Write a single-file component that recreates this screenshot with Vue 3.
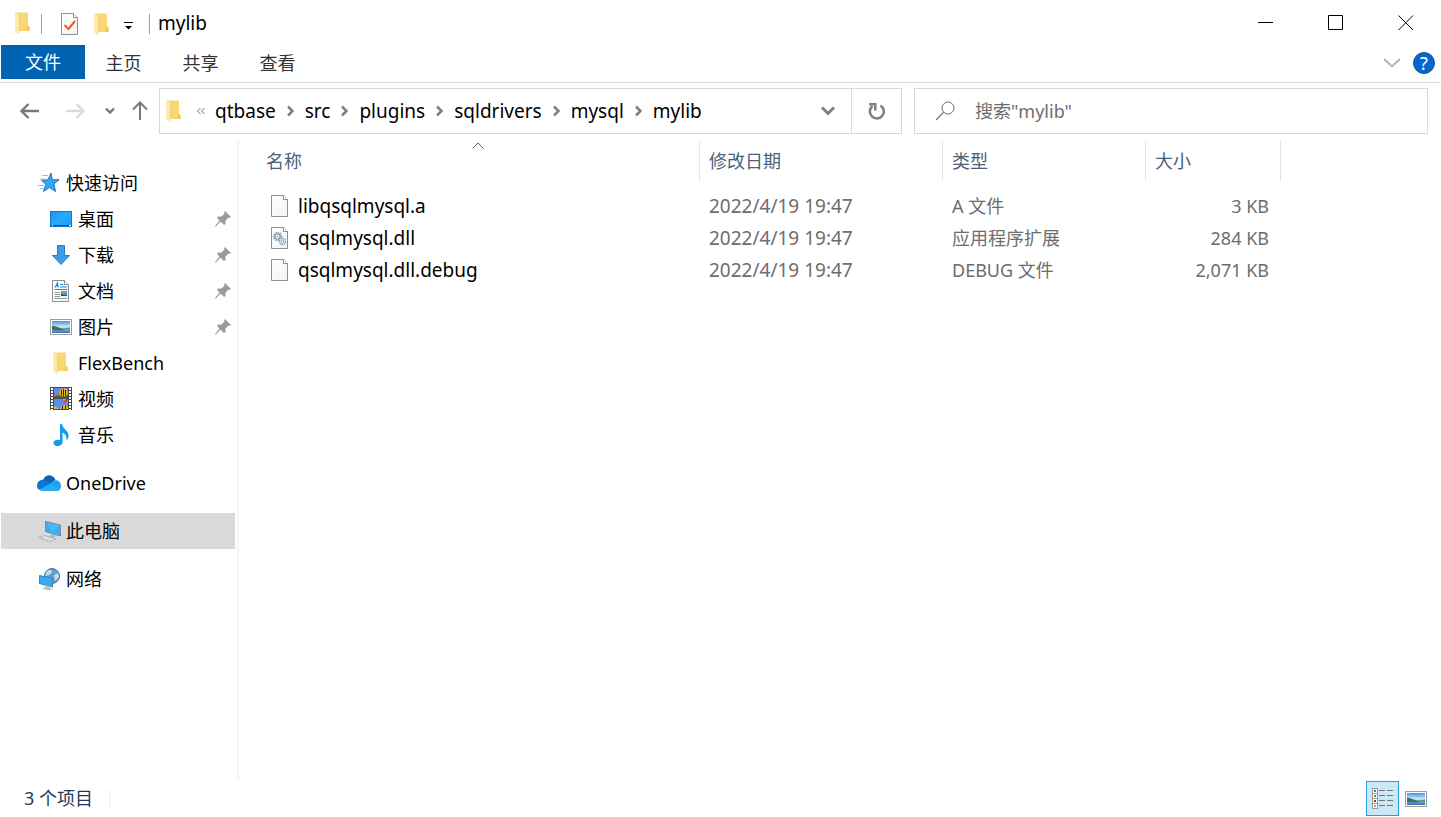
<template>
  <svg class="sprite" aria-hidden="true">
    <defs>
      <linearGradient id="folderFront" x1="0" y1="0" x2="1" y2="0">
        <stop offset="0" stop-color="#ffeebb" />
        <stop offset="1" stop-color="#fbe195" />
      </linearGradient>
      <linearGradient id="screenBlue" x1="0" y1="0" x2="1" y2="1">
        <stop offset="0" stop-color="#1a94f2" />
        <stop offset="0.5" stop-color="#27a9ff" />
        <stop offset="1" stop-color="#159bfb" />
      </linearGradient>
      <linearGradient id="sky" x1="0" y1="0" x2="0" y2="1">
        <stop offset="0" stop-color="#4f8fe6" />
        <stop offset="0.5" stop-color="#cfe9fb" />
        <stop offset="0.65" stop-color="#8fc0df" />
        <stop offset="1" stop-color="#2e6cab" />
      </linearGradient>
      <linearGradient id="paper" x1="0" y1="0" x2="1" y2="1">
        <stop offset="0" stop-color="#ffffff" />
        <stop offset="1" stop-color="#f1f3f4" />
      </linearGradient>
    </defs>

    <symbol id="folder" viewBox="0 0 24 24">
      <path d="M4 1.500H17V15L18.500 16V20H8z" fill="#f8d775" />
      <path d="M17 14.500L18.500 16V20H15.500z" fill="#eec65f" />
      <path d="M4 1.500L9 4V20L8 23L4 20.500z" fill="url(#folderFront)" />
      <path d="M9 4V20" stroke="#eac765" stroke-width="0.800" />
    </symbol>

    <symbol id="page" viewBox="0 0 24 24">
      <path d="M3.500 1.500H15.500L19.500 5.500V22.500H3.500z" fill="url(#paper)" stroke="#8f8f8f" />
      <path d="M15.500 1.500V5.500H19.500" fill="#fff" stroke="#8f8f8f" />
    </symbol>

    <symbol id="gears" viewBox="0 0 24 24">
      <use href="#page" width="24" height="24" />
      <g fill="none">
        <circle cx="9.500" cy="10.500" r="4" stroke="#9aa7b2" stroke-width="1.500" stroke-dasharray="1.500 0.800" />
        <circle cx="9.500" cy="10.500" r="2.600" stroke="#8a98a5" stroke-width="1.300" />
        <circle cx="9.500" cy="10.500" r="0.800" fill="#8a98a5" />
        <circle cx="14.500" cy="15.500" r="3.200" fill="#f3f8fb" stroke="#8196a6" stroke-width="1.200" stroke-dasharray="1.400 0.700" />
        <circle cx="14.500" cy="15.500" r="1.500" stroke="#7f9db4" />
      </g>
    </symbol>

    <symbol id="checkPage" viewBox="0 0 24 24">
      <use href="#page" width="24" height="24" />
      <path d="M6.500 13L10.500 17L17 9" fill="none" stroke="#f25c19" stroke-width="2" />
    </symbol>

    <symbol id="star" viewBox="0 0 24 24">
      <path d="M5 4.500H11M3 8H8M3 17.500H9M1 14.500H7" stroke="#7fc1ef" />
      <path d="M14 2L15.300 8.800L22 8.700L17 13L18.500 20.500L12.500 16.500L6.500 20.500L9 13.500L4.500 9.300L11 8.800z" fill="#35a6f2" stroke="#1a7bc4" />
    </symbol>

    <symbol id="desktop" viewBox="0 0 24 24">
      <rect x="1.500" y="4.500" width="21" height="15" fill="url(#screenBlue)" stroke="#147ac4" />
      <path d="M1 18.500H23" stroke="#0b4f87" />
      <path d="M3 18.500H4M20 18.500H22" stroke="#fff" />
    </symbol>

    <symbol id="download" viewBox="0 0 24 24">
      <path d="M8.500 2.500H15.500V12.500H20.500L12 21.500L3.500 12.500H8.500z" fill="#3f9ae8" stroke="#2478c4" />
    </symbol>

    <symbol id="document" viewBox="0 0 24 24">
      <use href="#page" width="24" height="24" />
      <path d="M6 8.500L8.500 4L9 8.500M7.500 6.800H9M11 5.500H14M11 8H18" fill="none" stroke="#2186d3" stroke-width="1.200" />
      <path d="M5.500 10.500H18" stroke="#2186d3" />
      <path d="M5.500 13.500H11M5.500 15.500H11M5.500 17.500H11M5.500 19.500H18" stroke="#9a9a9a" />
      <rect x="12" y="12" width="6" height="5" fill="#5ba0d6" />
      <path d="M12 17V14.500L15 16L18 15.500V17z" fill="#285c51" />
    </symbol>

    <symbol id="picture" viewBox="0 0 24 24">
      <rect x="1.500" y="4.500" width="21" height="15" fill="#fff" stroke="#9b9b9b" />
      <rect x="3" y="6" width="18" height="12" fill="url(#sky)" />
      <path d="M3 10.500L7 11.500L11 13L17 14.500L11 15.500L3 15z" fill="#39735e" />
      <path d="M14 13.500L21 12.500V14.500H16z" fill="#5f9180" />
    </symbol>

    <symbol id="video" viewBox="0 0 24 24">
      <rect x="1" y="0" width="22" height="23" fill="#4a4a4a" />
      <rect x="5" y="1" width="14" height="10" fill="#5c8fe6" />
      <rect x="5" y="12" width="14" height="10" fill="#5c8fe6" />
      <path d="M5 9L9 8L12 9L19 8V11H5z" fill="#2c6b3a" />
      <path d="M5 6H8L10 8L5 9.500z" fill="#d95a8a" />
      <circle cx="14.500" cy="5.500" r="4" fill="#f2b51d" />
      <path d="M12.500 3V8.500M14.500 2V9.500M16.500 3V8.500" stroke="#322622" />
      <path d="M12 12H19L16 16z" fill="#d7372e" />
      <path d="M13 12H17L15 14z" fill="#efb321" />
      <path d="M11 22A4 4 0 0 1 19 22z" fill="#efb321" />
      <path d="M13.500 18.500V22M16.500 18.500V22" stroke="#322622" />
      <path d="M5 19L9 21V22H5z" fill="#e0c24b" />
      <path d="M3 1V23M21 1V23" stroke="#fff" stroke-width="2" stroke-dasharray="2 1" />
    </symbol>

    <symbol id="music" viewBox="0 0 24 24">
      <path d="M11 1H13C13.500 6 20.500 8 19.500 14L17.500 18C18 13 16 10.500 13.500 9.500V19C13.500 24 4.500 24.500 4.500 20C4.500 17 8.500 16 11 17z" fill="#0e9bf0" />
    </symbol>

    <symbol id="cloud" viewBox="0 0 24 24">
      <path d="M6 9C8 3 16 2.500 18.500 9L12 14z" fill="#0a63b8" />
      <path d="M0 15C0 10 4 8 7.500 9L17 14L4 19C1.500 19 0 17.500 0 15z" fill="#0f78d4" />
      <path d="M13 13L17 9.500C21 8.500 24 11 24 15C24 18 22 20 19 20H5L2 18.800z" fill="#1fa2ee" />
      <path d="M2 18.800L14 13L23 18C22 19.500 21 20 19 20H5z" fill="#2baaf2" />
    </symbol>

    <symbol id="computer" viewBox="0 0 24 24">
      <path d="M8.500 2.500L23.500 6V17L8.500 12.500z" fill="#38adf7" stroke="#6f8ba0" />
      <path d="M9.500 3.500L23 6.500L15 14z" fill="#5cc0ff" opacity="0.500" />
      <path d="M14 15L19 16.500L17 19L13 18z" fill="#aeb8bf" />
      <path d="M1.500 18.500L8 16.500L19 20L12 22.500z" fill="#d8dee2" stroke="#9aa5ad" stroke-dasharray="2 1" />
    </symbol>

    <symbol id="network" viewBox="0 0 24 24">
      <circle cx="15" cy="9" r="7.500" fill="#5d9fca" stroke="#397da8" />
      <path d="M9.500 5C12 2 14 3 15.500 5L12 8L8 9zM17 8L21 6L22 10L18 14z" fill="#c0e0ee" />
      <path d="M2.500 8.500L15.500 11.500V20L2.500 16.500z" fill="#34adf8" stroke="#527f9d" />
      <path d="M8 18L13 19.500V21L16 22L11 23.500L5 21.500L8 20.500z" fill="#b9c3ca" />
    </symbol>

    <symbol id="pin" viewBox="0 0 16 16">
      <path d="M10 0L16 6L14.500 7L13.500 6.500L10.500 9.500V13L9 14L5.500 10.500L1 15.500L0 15.500L0.500 14.500L4.500 9.500L2 7L3 5.500H6.500L9.500 2.500L9 1.500z" fill="#929da4" />
    </symbol>

    <symbol id="crumbArrow" viewBox="0 0 10 12">
      <path d="M2 1.500L6.500 6L2 10.500" fill="none" stroke="#808080" stroke-width="2.500" />
    </symbol>
  </svg>

  <div class="explorer">
    <header class="titleBar">
      <svg class="icon"><use href="#folder" /></svg>
      <span class="divider"></span>
      <button class="quickButton" aria-label="属性"><svg class="icon"><use href="#checkPage" /></svg></button>
      <button class="quickButton" aria-label="新建文件夹"><svg class="icon"><use href="#folder" /></svg></button>
      <button class="quickMenu" aria-label="自定义快速访问工具栏">
        <svg width="10" height="10" viewBox="0 0 10 10">
          <path d="M0 1.500H9" stroke="#000" />
          <path d="M1 5H8L4.500 8.500z" fill="#000" />
        </svg>
      </button>
      <span class="divider"></span>
      <h1 class="title">mylib</h1>
      <div class="windowButtons">
        <button aria-label="最小化">
          <svg width="16" height="16" viewBox="0 0 16 16"><path d="M0 7.500H15" stroke="#000" /></svg>
        </button>
        <button aria-label="最大化">
          <svg width="16" height="16" viewBox="0 0 16 16"><path d="M0.500 0.500H14.500V14.500H0.500z" fill="none" stroke="#000" /></svg>
        </button>
        <button aria-label="关闭">
          <svg width="16" height="16" viewBox="0 0 16 16"><path d="M0.500 0.500L15 15M15 0.500L0.500 15" stroke="#000" /></svg>
        </button>
      </div>
    </header>

    <nav class="ribbon">
      <button class="fileTab">文件</button>
      <button v-for="tab in tabs" :key="tab" class="tab">{{ tab }}</button>
      <div class="ribbonTools">
        <button aria-label="展开功能区">
          <svg width="18" height="12" viewBox="0 0 18 12"><path d="M1 2L9 9.500L17 2" fill="none" stroke="#b4b4b4" stroke-width="2" /></svg>
        </button>
        <button class="help" aria-label="帮助">?</button>
      </div>
    </nav>

    <div class="navBar">
      <div class="navButtons">
        <button class="back" aria-label="后退">
          <svg width="20" height="16" viewBox="0 0 20 16"><path d="M19 8H2M8.500 1L1.500 8L8.500 15" fill="none" stroke="#787878" stroke-width="2.400" /></svg>
        </button>
        <button class="forward" aria-label="前进" disabled>
          <svg width="20" height="16" viewBox="0 0 20 16"><path d="M0 8H17M10.500 1L17.500 8L10.500 15" fill="none" stroke="#dadada" stroke-width="2.400" /></svg>
        </button>
        <button class="recent" aria-label="最近位置">
          <svg width="10" height="8" viewBox="0 0 10 8"><path d="M1 1.500L5 5.500L9 1.500" fill="none" stroke="#787878" stroke-width="2.400" /></svg>
        </button>
        <button class="up" aria-label="向上">
          <svg width="16" height="20" viewBox="0 0 16 20"><path d="M8 19V2M1 8.500L8 1.500L15 8.500" fill="none" stroke="#787878" stroke-width="2" /></svg>
        </button>
      </div>
      <div class="addressBar">
        <svg class="icon"><use href="#folder" /></svg>
        <button class="overflow" aria-label="更多位置">
          <svg width="10" height="8" viewBox="0 0 10 8"><path d="M4.500 1L1.500 4L4.500 7M8.500 1L5.500 4L8.500 7" fill="none" stroke="#707070" /></svg>
        </button>
        <template v-for="(crumb, index) in crumbs" :key="crumb">
          <svg v-if="index > 0" class="crumbArrow"><use href="#crumbArrow" /></svg>
          <a class="crumb" href="#">{{ crumb }}</a>
        </template>
        <button class="history" aria-label="以前的位置">
          <svg width="14" height="10" viewBox="0 0 14 10"><path d="M1 1.500L7 7.500L13 1.500" fill="none" stroke="#808080" stroke-width="3" /></svg>
        </button>
        <button class="refresh" aria-label="刷新">
          <svg width="18" height="18" viewBox="0 0 18 18">
            <path d="M12.500 3.500A7 7 0 1 1 4.500 4" fill="none" stroke="#808080" stroke-width="2.600" />
            <path d="M1 1H8.500V8.500H6V3.500H1z" fill="#808080" />
          </svg>
        </button>
      </div>
      <label class="searchBox">
        <svg width="20" height="20" viewBox="0 0 20 20">
          <circle cx="13" cy="7" r="6" fill="none" stroke="#707070" />
          <path d="M8.700 11.200L1 19" stroke="#707070" stroke-width="1.200" />
        </svg>
        <input v-model="search" type="text" aria-label="搜索" placeholder="搜索&quot;mylib&quot;">
      </label>
    </div>

    <div class="body">
      <aside class="sidebar">
        <ul v-for="(group, index) in groups" :key="index" class="group">
          <li v-for="item in group" :key="item.label">
            <a class="place" :class="{ child: item.child, selected: item.selected }" href="#">
              <svg class="icon"><use :href="`#${item.icon}`" /></svg>
              <span>{{ item.label }}</span>
              <svg v-if="item.pinned" class="pin"><use href="#pin" /></svg>
            </a>
          </li>
        </ul>
      </aside>

      <main class="content">
        <table class="files">
          <colgroup>
            <col class="nameCol">
            <col class="dateCol">
            <col class="typeCol">
            <col class="sizeCol">
            <col>
          </colgroup>
          <thead>
            <tr>
              <th aria-sort="ascending">
                名称
                <svg class="sortMark" width="12" height="7" viewBox="0 0 12 7"><path d="M0.500 6.500L6 1L11.500 6.500" fill="none" stroke="#606060" /></svg>
              </th>
              <th>修改日期</th>
              <th>类型</th>
              <th>大小</th>
              <td></td>
            </tr>
          </thead>
          <tbody>
            <tr v-for="file in files" :key="file.name">
              <td class="fileName">
                <div class="fileCell">
                  <svg class="icon"><use :href="`#${file.icon}`" /></svg>
                  <span>{{ file.name }}</span>
                </div>
              </td>
              <td class="fileDate">{{ file.date }}</td>
              <td>{{ file.type }}</td>
              <td class="fileSize">{{ file.size }}</td>
              <td></td>
            </tr>
          </tbody>
        </table>
      </main>
    </div>

    <footer class="statusBar">
      <span class="count">{{ files.length }} 个项目</span>
      <div class="viewButtons">
        <button class="active" aria-label="详细信息">
          <svg width="22" height="22" viewBox="0 0 22 22">
            <rect x="0.500" y="0.500" width="5" height="20" fill="#fff" stroke="#9b9b9b" />
            <path d="M0 5.500H6M0 10.500H6M0 15.500H6" stroke="#9b9b9b" />
            <path d="M2 3H4" stroke="#2f7dbb" stroke-width="2" />
            <path d="M2 8H4" stroke="#8f7d33" stroke-width="2" />
            <path d="M2 13H4" stroke="#b02a20" stroke-width="2" />
            <path d="M2 18H4" stroke="#8fa9c4" stroke-width="2" />
            <path d="M7 2.500H13M15 2.500H21M7 7.500H13M15 7.500H21M7 12.500H13M15 12.500H21M7 17.500H13M15 17.500H21" stroke="#757575" />
          </svg>
        </button>
        <button aria-label="大图标"><svg class="icon"><use href="#picture" /></svg></button>
      </div>
    </footer>
  </div>
</template>

<script setup>
import { ref } from 'vue';

const search = ref('');

const tabs = ['主页', '共享', '查看'];

const crumbs = ['qtbase', 'src', 'plugins', 'sqldrivers', 'mysql', 'mylib'];

const groups = [
  [
    { label: '快速访问', icon: 'star' },
    { label: '桌面', icon: 'desktop', child: true, pinned: true },
    { label: '下载', icon: 'download', child: true, pinned: true },
    { label: '文档', icon: 'document', child: true, pinned: true },
    { label: '图片', icon: 'picture', child: true, pinned: true },
    { label: 'FlexBench', icon: 'folder', child: true },
    { label: '视频', icon: 'video', child: true },
    { label: '音乐', icon: 'music', child: true }
  ],
  [{ label: 'OneDrive', icon: 'cloud' }],
  [{ label: '此电脑', icon: 'computer', selected: true }],
  [{ label: '网络', icon: 'network' }]
];

const files = [
  { name: 'libqsqlmysql.a', icon: 'page', date: '2022/4/19 19:47', type: 'A 文件', size: '3 KB' },
  { name: 'qsqlmysql.dll', icon: 'gears', date: '2022/4/19 19:47', type: '应用程序扩展', size: '284 KB' },
  { name: 'qsqlmysql.dll.debug', icon: 'page', date: '2022/4/19 19:47', type: 'DEBUG 文件', size: '2,071 KB' }
];
</script>

<style>
body {
  background-color: #fff;
}
</style>

<style scoped>
.sprite {
  position: absolute;
  width: 0;
  height: 0;
}

.explorer {
  display: flex;
  flex-direction: column;
  min-height: 100vh;
  background-color: #fff;
  color: #000;
  font-family: "Noto Sans", "Noto Sans CJK SC", sans-serif;
  font-size: 18px;
  line-height: 24px;
}

button {
  display: flex;
  align-items: center;
  justify-content: center;
  padding: 0;
  border: none;
  background: none;
  color: inherit;
  font: inherit;
}

a {
  color: inherit;
  text-decoration: none;
}

svg {
  display: block;
  flex: none;
}

.icon {
  width: 24px;
  height: 24px;
}

.titleBar {
  display: flex;
  align-items: center;
  height: 45px;
  padding-left: 11px;
}

.divider {
  width: 1px;
  height: 20px;
  margin: 2px 8px 0 6px;
  background-color: #a0a0a0;
}

.quickButton {
  width: 32px;
  padding-left: 8px;
  margin-top: 3px;
}

.quickMenu {
  width: 29px;
  margin-top: 6px;
}

.title {
  margin: 0;
  font-size: 19px;
  font-weight: 400;
  line-height: 22px;
}

.windowButtons {
  display: flex;
  margin-left: auto;
}

.windowButtons button {
  width: 70px;
  height: 45px;
}

.ribbon {
  display: flex;
  height: 37px;
  border-bottom: 1px solid #dadbdc;
}

.fileTab {
  width: 84px;
  height: 34px;
  margin-left: 1px;
  background-color: #0063b1;
  color: #fff;
}

.tab {
  width: 77px;
  height: 36px;
  color: #333;
}

.ribbonTools {
  display: flex;
  align-items: center;
  gap: 12px;
  height: 36px;
  margin-left: auto;
  padding-right: 6px;
}

.help {
  width: 22px;
  height: 22px;
  border: 1px solid #17528c;
  border-radius: 50%;
  background-color: #0068d0;
  color: #fff;
}

.navBar {
  display: grid;
  grid-template-columns: 159px minmax(0, 743fr) minmax(0, 526fr);
  align-items: center;
  padding: 5px 13px 6px 0;
}

.navButtons {
  display: flex;
  align-items: center;
  padding-left: 20px;
}

.forward {
  margin-left: 26px;
}

.recent {
  margin-left: 19px;
}

.up {
  margin-left: 17px;
}

.addressBar {
  display: flex;
  align-items: center;
  height: 46px;
  padding-left: 2px;
  border: 1px solid #d9d9d9;
  box-sizing: border-box;
}

.overflow {
  width: 29px;
}

.crumb {
  font-size: 19px;
}

.crumbArrow {
  width: 10px;
  height: 12px;
  margin: 0 9px 0 10px;
}

.history {
  width: 46px;
  height: 44px;
  margin-left: auto;
}

.refresh {
  width: 50px;
  height: 44px;
  border-left: 1px solid #d9d9d9;
}

.searchBox {
  display: flex;
  align-items: center;
  gap: 20px;
  height: 46px;
  margin-left: 12px;
  padding-left: 20px;
  border: 1px solid #d9d9d9;
  box-sizing: border-box;
}

.searchBox input {
  flex: 1;
  min-width: 0;
  padding: 0;
  border: none;
  outline: none;
  background: none;
  color: #000;
  font: inherit;
}

.searchBox input::placeholder {
  color: #6d6d6d;
  opacity: 1;
}

.body {
  display: flex;
  flex: 1;
}

.sidebar {
  flex: 0 0 239px;
  padding: 25px 2px 0 1px;
  border-right: 2px solid #f6f6f6;
  box-sizing: border-box;
}

.group {
  margin: 0 0 12px;
  padding: 0;
  list-style: none;
}

.place {
  display: flex;
  align-items: center;
  gap: 5px;
  height: 36px;
  padding: 0 4px 0 36px;
}

.place.child {
  padding-left: 48px;
}

.place.selected {
  background-color: #d9d9d9;
}

.pin {
  width: 16px;
  height: 16px;
  margin-left: auto;
}

.content {
  flex: 1;
  min-width: 0;
  padding-left: 18px;
}

.files {
  width: 100%;
  margin-top: 1px;
  border-collapse: separate;
  border-spacing: 0;
  table-layout: fixed;
}

.nameCol {
  width: 443px;
}

.dateCol {
  width: 243px;
}

.typeCol {
  width: 203px;
}

.sizeCol {
  width: 135px;
}

.files th {
  position: relative;
  height: 40px;
  padding: 0 9px;
  border-right: 1px solid #e5e5e5;
  color: #4c607a;
  font-weight: 400;
  text-align: left;
}

.files thead::after {
  content: "";
  display: block;
  height: 9px;
}

.files tbody td {
  height: 32px;
  padding: 0 9px;
  color: #6d6d6d;
  white-space: nowrap;
}

.files tbody .fileName {
  padding-left: 11px;
  color: #000;
  font-size: 19px;
}

.files tbody .fileDate {
  font-size: 19px;
}

.files tbody .fileSize {
  padding-right: 12px;
  text-align: right;
}

.fileCell {
  display: flex;
  align-items: center;
  gap: 6px;
}

.sortMark {
  position: absolute;
  top: 1px;
  left: 50%;
  margin-left: -6px;
}

.statusBar {
  display: flex;
  align-items: center;
  height: 37px;
  padding-right: 13px;
  padding-left: 24px;
}

.count {
  margin-bottom: 2px;
  padding-right: 16px;
  border-right: 2px solid #f6f6f6;
  color: #1e395b;
  line-height: 18px;
}

.viewButtons {
  display: flex;
  align-items: center;
  gap: 5px;
  margin-left: auto;
}

.viewButtons .active {
  width: 33px;
  height: 35px;
  border: 1px solid #26a0da;
  background-color: #cbe8f6;
}
</style>
